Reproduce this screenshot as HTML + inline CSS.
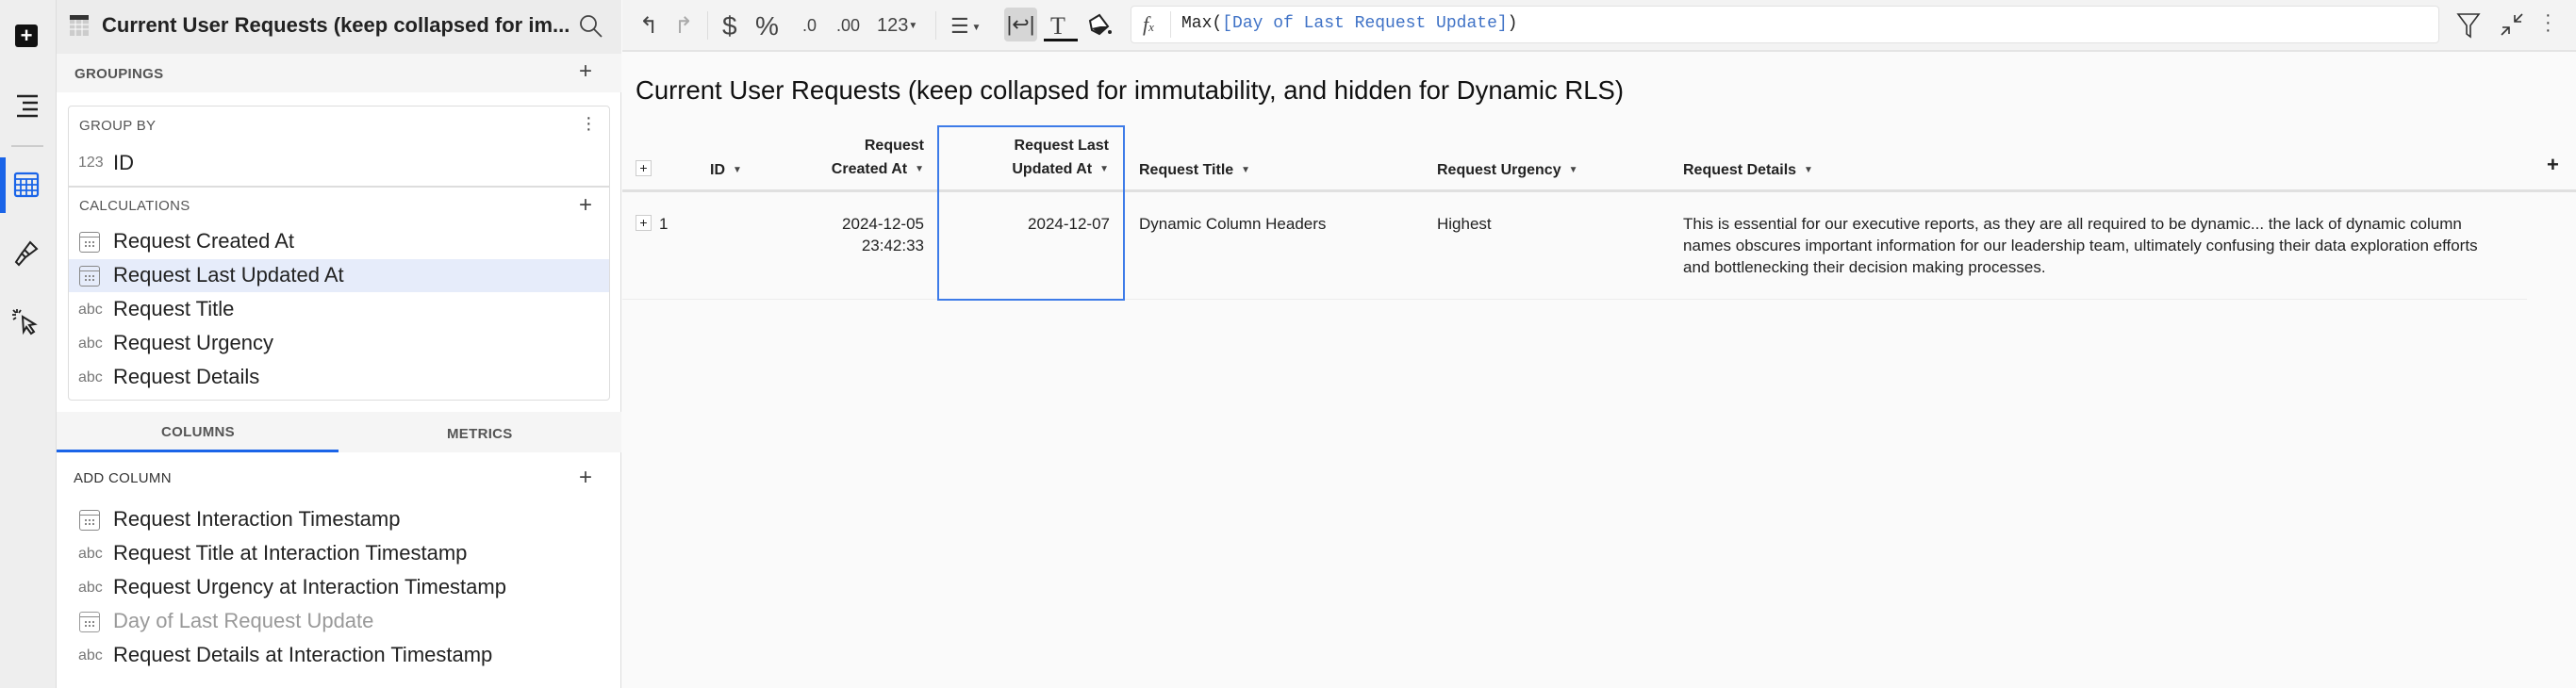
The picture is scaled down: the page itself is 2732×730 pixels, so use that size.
<!DOCTYPE html>
<html><head><meta charset="utf-8"><style>
*{margin:0;padding:0;box-sizing:border-box}
body{width:2732px;height:730px;overflow:hidden;background:#fafafa;font-family:"Liberation Sans",sans-serif;color:#222;position:relative}
.a{position:absolute;white-space:nowrap}
.cap{font-size:15px;color:#555;letter-spacing:.3px}
.row{font-size:22px;color:#222}
.ty{font-size:16px;color:#777}
.hd{font-size:16px;font-weight:bold;color:#222;line-height:25px}
.dt{font-size:17px;color:#222;line-height:23px}
.tri{font-size:10px;color:#444;margin-left:8px;vertical-align:2px}
.cal{position:absolute;width:22px;height:22px;border:1.6px solid #888;border-radius:3px}
.cal:before{content:"";position:absolute;left:0;right:0;top:4px;border-top:1.6px solid #888}
.cal:after{content:"";position:absolute;left:5px;top:9px;width:2px;height:2px;background:#888;box-shadow:4px 0 #888,8px 0 #888,0 4px #888,4px 4px #888,8px 4px #888}
.tb{position:absolute;top:0;font-size:24px;color:#444;line-height:55px}
</style></head><body>
<div class="a" style="left:0;top:0;width:60px;height:730px;background:#eeeeee;border-right:1px solid #ddd"></div>
<div class="a" style="left:16px;top:26px;width:24px;height:24px;background:#111;border-radius:3px;color:#fff;font-size:22px;font-weight:bold;line-height:23px;text-align:center">+</div>
<svg class="a" style="left:14px;top:96px" width="30" height="30" viewBox="0 0 30 30"><path d="M4 6h22M10 13h16M10 20h16M4 27h22" stroke="#222" stroke-width="2.4"/></svg>
<div class="a" style="left:12px;top:154px;width:34px;height:2px;background:#ccc"></div>
<div class="a" style="left:0;top:167px;width:6px;height:59px;background:#1a64e8"></div>
<svg class="a" style="left:14px;top:181px" width="28" height="30" viewBox="0 0 28 30"><rect x="2" y="3" width="24" height="24" rx="2" fill="none" stroke="#1a64e8" stroke-width="2.2"/><path d="M2 9h24M2 15h24M2 21h24M8 9v18M14 9v18M20 9v18" stroke="#1a64e8" stroke-width="1.8"/></svg>
<svg class="a" style="left:14px;top:254px" width="28" height="30" viewBox="0 0 28 30"><path d="M18 3l7 7-8 6-5-5zM12 11l5 5-4 3-4-4zM9 15l4 4-7 8-3-3z" fill="none" stroke="#222" stroke-width="2"/></svg>
<svg class="a" style="left:12px;top:326px" width="30" height="30" viewBox="0 0 30 30"><path d="M12 10l13 8-6 1 5 7-3 2-5-7-3 5z" fill="none" stroke="#222" stroke-width="2"/><path d="M6 2v4M1 8h4M2 3l3 3M10 3l-2 3M2 13l3-2" stroke="#222" stroke-width="1.8"/></svg>
<div class="a" style="left:60px;top:0;width:599px;height:730px;background:#fff;border-right:1px solid #ddd"></div>
<div class="a" style="left:60px;top:0;width:599px;height:57px;background:#ececec"></div>
<svg class="a" style="left:73px;top:15px" width="22" height="24" viewBox="0 0 22 24"><rect x="1" y="1" width="20" height="22" fill="#ccc"/><rect x="1" y="1" width="20" height="5" fill="#333"/><path d="M1 11h20M1 16h20M7 6v17M14 6v17" stroke="#fff" stroke-width="1"/></svg>
<div class="a" style="left:108px;top:14px;font-size:22px;font-weight:bold;color:#222">Current User Requests (keep collapsed for im...</div>
<svg class="a" style="left:614px;top:15px" width="26" height="26" viewBox="0 0 26 26"><circle cx="10" cy="10" r="8" fill="none" stroke="#444" stroke-width="1.8"/><path d="M16 16l8 8" stroke="#444" stroke-width="1.8"/></svg>
<div class="a" style="left:60px;top:57px;width:599px;height:41px;background:#f5f5f5"></div>
<div class="a cap" style="left:79px;top:70px;font-weight:bold">GROUPINGS</div>
<div class="a" style="left:614px;top:62px;font-size:24px;color:#444">+</div>
<div class="a" style="left:72px;top:112px;width:575px;height:313px;border:1.5px solid #ddd;border-radius:4px"></div>
<div class="a cap" style="left:84px;top:125px">GROUP BY</div>
<div class="a" style="left:621px;top:122px;font-size:20px;color:#444;line-height:6px;width:6px;text-align:center">·<br>·<br>·</div>
<div class="a ty" style="left:83px;top:164px">123</div>
<div class="a row" style="left:120px;top:160px">ID</div>
<div class="a" style="left:73px;top:197px;width:573px;height:1.5px;background:#ddd"></div>
<div class="a cap" style="left:84px;top:210px">CALCULATIONS</div>
<div class="a" style="left:614px;top:204px;font-size:24px;color:#444">+</div>
<div class="a" style="left:73px;top:275px;width:573px;height:35px;background:#e6ecfa"></div>
<div class="cal" style="left:84px;top:246px"></div><div class="a row" style="left:120px;top:243px">Request Created At</div>
<div class="cal" style="left:84px;top:282px"></div><div class="a row" style="left:120px;top:279px">Request Last Updated At</div>
<div class="a ty" style="left:83px;top:320px">abc</div><div class="a row" style="left:120px;top:315px">Request Title</div>
<div class="a ty" style="left:83px;top:356px">abc</div><div class="a row" style="left:120px;top:351px">Request Urgency</div>
<div class="a ty" style="left:83px;top:392px">abc</div><div class="a row" style="left:120px;top:387px">Request Details</div>
<div class="a" style="left:60px;top:437px;width:599px;height:43px;background:#f5f5f5"></div>
<div class="a cap" style="left:171px;top:450px;font-weight:bold">COLUMNS</div>
<div class="a cap" style="left:474px;top:452px;font-weight:bold">METRICS</div>
<div class="a" style="left:60px;top:477px;width:299px;height:3px;background:#1a64e8"></div>
<div class="a cap" style="left:78px;top:499px;color:#333">ADD COLUMN</div>
<div class="a" style="left:614px;top:493px;font-size:24px;color:#444">+</div>
<div class="cal" style="left:84px;top:541px"></div><div class="a row" style="left:120px;top:538px">Request Interaction Timestamp</div>
<div class="a ty" style="left:83px;top:579px">abc</div><div class="a row" style="left:120px;top:574px">Request Title at Interaction Timestamp</div>
<div class="a ty" style="left:83px;top:615px">abc</div><div class="a row" style="left:120px;top:610px">Request Urgency at Interaction Timestamp</div>
<div class="cal" style="left:84px;top:649px;border-color:#999"></div><div class="a row" style="left:120px;top:646px;color:#999">Day of Last Request Update</div>
<div class="a ty" style="left:83px;top:687px">abc</div><div class="a row" style="left:120px;top:682px">Request Details at Interaction Timestamp</div>
<div class="a" style="left:660px;top:0;width:2072px;height:55px;background:#f3f3f3;border-bottom:2px solid #e4e4e4"></div>
<div class="tb" style="left:678px">↰</div>
<div class="tb" style="left:715px;color:#aaa">↱</div>
<div class="a" style="left:750px;top:12px;width:1px;height:30px;background:#ddd"></div>
<div class="tb" style="left:766px;font-size:28px">$</div>
<div class="tb" style="left:801px;font-size:28px">%</div>
<div class="tb" style="left:851px;font-size:18px">.0</div>
<div class="tb" style="left:887px;font-size:18px">.00</div>
<div class="tb" style="left:930px;font-size:20px">123<span style="font-size:10px;vertical-align:3px">▼</span></div>
<div class="a" style="left:992px;top:12px;width:1px;height:30px;background:#ddd"></div>
<div class="tb" style="left:1008px;font-size:22px">☰<span style="font-size:10px;vertical-align:3px"> ▼</span></div>
<div class="a" style="left:1065px;top:8px;width:35px;height:36px;background:#d6d6d6;border-radius:4px;font-size:22px;text-align:center;line-height:36px;color:#333">|↩|</div>
<div class="tb" style="left:1114px;font-size:26px;font-family:'Liberation Serif',serif">T</div>
<div class="a" style="left:1107px;top:41px;width:36px;height:3px;background:#111"></div>
<svg class="a" style="left:1152px;top:12px" width="28" height="30" viewBox="0 0 28 30"><path d="M4 10l10-6 9 12-9 8-8-4z" fill="#fff" stroke="#222" stroke-width="2"/><path d="M6 18l9-2 8 0-9 8z" fill="#222"/><circle cx="25" cy="22" r="2" fill="#222"/></svg>
<div class="a" style="left:1199px;top:6px;width:1388px;height:40px;background:#fff;border:1px solid #e2e2e2;border-radius:4px"></div>
<div class="a" style="left:1212px;top:13px;font-size:22px;font-style:italic;font-family:'Liberation Serif',serif;color:#444">f<span style="font-size:13px">x</span></div>
<div class="a" style="left:1241px;top:12px;width:1px;height:28px;background:#e2e2e2"></div>
<div class="a" style="left:1253px;top:15px;font-family:'Liberation Mono',monospace;font-size:18px;color:#222">Max(<span style="color:#3f72c6">[Day of Last Request Update]</span>)</div>
<svg class="a" style="left:2605px;top:12px" width="26" height="30" viewBox="0 0 26 30"><path d="M2 3h22L15 15v12l-4-3V15z" fill="none" stroke="#333" stroke-width="1.6"/></svg>
<svg class="a" style="left:2650px;top:12px" width="28" height="28" viewBox="0 0 28 28"><path d="M17 11l8-8M17 4v7h7M11 17l-8 8M4 17h7v7" fill="none" stroke="#333" stroke-width="1.6"/></svg>
<div class="a" style="left:2699px;top:12px;font-size:20px;color:#444;line-height:8px">·<br>·<br>·</div>
<div class="a" style="left:674px;top:80px;font-size:27.5px;color:#111">Current User Requests (keep collapsed for immutability, and hidden for Dynamic RLS)</div>
<div class="a" style="left:674px;top:170px;width:17px;height:17px;border:1px solid #ccc;font-size:14px;text-align:center;line-height:15px;background:#fff">+</div>
<div class="a hd" style="left:753px;top:168px">ID<span class="tri">▼</span></div>
<div class="a hd" style="left:820px;top:142px;width:160px;text-align:right">Request<br>Created At<span class="tri">▼</span></div>
<div class="a hd" style="left:1010px;top:142px;width:166px;text-align:right">Request Last<br>Updated At<span class="tri">▼</span></div>
<div class="a hd" style="left:1208px;top:168px">Request Title<span class="tri">▼</span></div>
<div class="a hd" style="left:1524px;top:168px">Request Urgency<span class="tri">▼</span></div>
<div class="a hd" style="left:1785px;top:168px">Request Details<span class="tri">▼</span></div>
<div class="a" style="left:2701px;top:162px;font-size:22px;font-weight:bold">+</div>
<div class="a" style="left:660px;top:201px;width:2072px;height:3px;background:#e0e0e0"></div>
<div class="a" style="left:674px;top:228px;width:17px;height:17px;border:1px solid #ccc;font-size:14px;text-align:center;line-height:15px;background:#fff">+</div>
<div class="a dt" style="left:699px;top:226px">1</div>
<div class="a dt" style="left:820px;top:226px;width:160px;text-align:right">2024-12-05<br>23:42:33</div>
<div class="a dt" style="left:1010px;top:226px;width:167px;text-align:right">2024-12-07</div>
<div class="a dt" style="left:1208px;top:226px">Dynamic Column Headers</div>
<div class="a dt" style="left:1524px;top:226px">Highest</div>
<div class="a dt" style="left:1785px;top:226px;white-space:normal;width:855px">This is essential for our executive reports, as they are all required to be dynamic... the lack of dynamic column names obscures important information for our leadership team, ultimately confusing their data exploration efforts and bottlenecking their decision making processes.</div>
<div class="a" style="left:660px;top:317px;width:2020px;height:1px;background:#ececec"></div>
<div class="a" style="left:994px;top:133px;width:199px;height:186px;border:2px solid #3d7be8"></div>
</body></html>
